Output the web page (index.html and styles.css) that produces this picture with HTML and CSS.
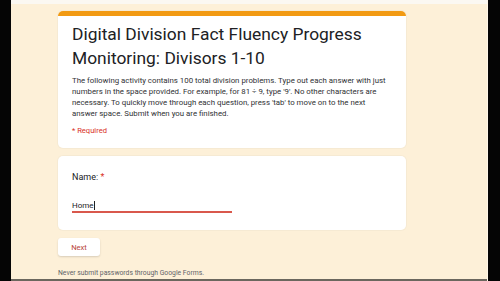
FILE: index.html
```html
<!DOCTYPE html>
<html>
<head>
<meta charset="utf-8">
<link rel="stylesheet" href="styles.css">
</head>
<body>
<div class="frame">
  <div class="side left"></div>
  <div class="screen">
    <div class="topstrip"></div>
    <div class="content">
      <div class="card header">
        <div class="accent"></div>
        <div class="card-body">
          <h1 class="title">Digital Division Fact Fluency Progress Monitoring: Divisors 1-10</h1>
          <p class="desc">The following activity contains 100 total division problems. Type out each answer with just numbers in the space provided. For example, for 81 ÷ 9, type '9'. No other characters are necessary. To quickly move through each question, press 'tab' to move on to the next answer space. Submit when you are finished.</p>
          <div class="required">* Required</div>
        </div>
      </div>
      <div class="card question">
        <div class="qlabel">Name: <span class="star">*</span></div>
        <div class="answer"><span class="value">Home</span><span class="caret"></span></div>
      </div>
      <div class="actions">
        <button class="next">Next</button>
      </div>
      <div class="footer">Never submit passwords through Google Forms.</div>
    </div>
    <div class="bottomline"></div>
  </div>
  <div class="side right"></div>
</div>
</body>
</html>
```

FILE: styles.css
```css
html, body {
  margin: 0;
  padding: 0;
  width: 500px;
  height: 281px;
  overflow: hidden;
  background: #000;
}
.frame {
  display: flex;
  height: 281px;
}
.side.left { width: 11px; background: #050505; }
.side.right { width: 12px; background: #050505; }
.screen {
  flex: 1;
  display: flex;
  flex-direction: column;
  background: #fdf0d8;
  border-right: 1px solid #fff6e8;
  overflow: hidden;
}
.topstrip {
  height: 4px;
  flex: none;
  background: #fbf8f2;
}
.content {
  flex: 1;
  padding: 7px 0 0 47px;
  font-family: Roboto, "Liberation Sans", sans-serif;
  color: #202124;
}
.card {
  width: 348px;
  background: #fff;
  border-radius: 5px;
  box-shadow: 0 0 0 1px #f6ead3;
}
.accent {
  height: 5px;
  background: #f29a12;
  border-radius: 5px 5px 0 0;
}
.card-body {
  padding: 6px 14px 12px 14px;
}
.title {
  margin: 0;
  font-family: Roboto, "Open Sans", sans-serif;
  font-weight: 400;
  font-size: 17.4px;
  line-height: 24px;
  color: #202124;
}
.desc {
  margin: 5px 0 0 0;
  font-size: 7.85px;
  line-height: 11px;
  color: #303134;
}
.required {
  margin-top: 6px;
  font-size: 7.6px;
  line-height: 11px;
  color: #d93025;
}
.question {
  margin-top: 8px;
  height: 74px;
  padding: 15px 14px 0 14px;
  box-sizing: border-box;
}
.qlabel {
  font-size: 9px;
  line-height: 12px;
}
.star { color: #d93025; }
.answer {
  margin-top: 17px;
  width: 160px;
  border-bottom: 2px solid #d9584c;
  font-size: 8px;
  line-height: 11px;
  height: 11px;
  display: flex;
  align-items: center;
}
.caret {
  width: 1px;
  height: 9px;
  background: #202124;
  margin-left: 0.5px;
}
.actions {
  margin-top: 8px;
  display: flex;
}
.next {
  display: block;
  width: 42px;
  height: 18px;
  border: none;
  border-radius: 3px;
  background: #fff;
  box-shadow: 0 1px 2px rgba(0,0,0,0.15);
  color: #b8453a;
  font-family: Roboto, "Liberation Sans", sans-serif;
  font-size: 7.6px;
  padding: 0;
}
.footer {
  margin-top: 13px;
  font-size: 6.8px;
  line-height: 8px;
  color: #5f6368;
}
.bottomline {
  height: 2px;
  flex: none;
  background: #6b675e;
}
```
